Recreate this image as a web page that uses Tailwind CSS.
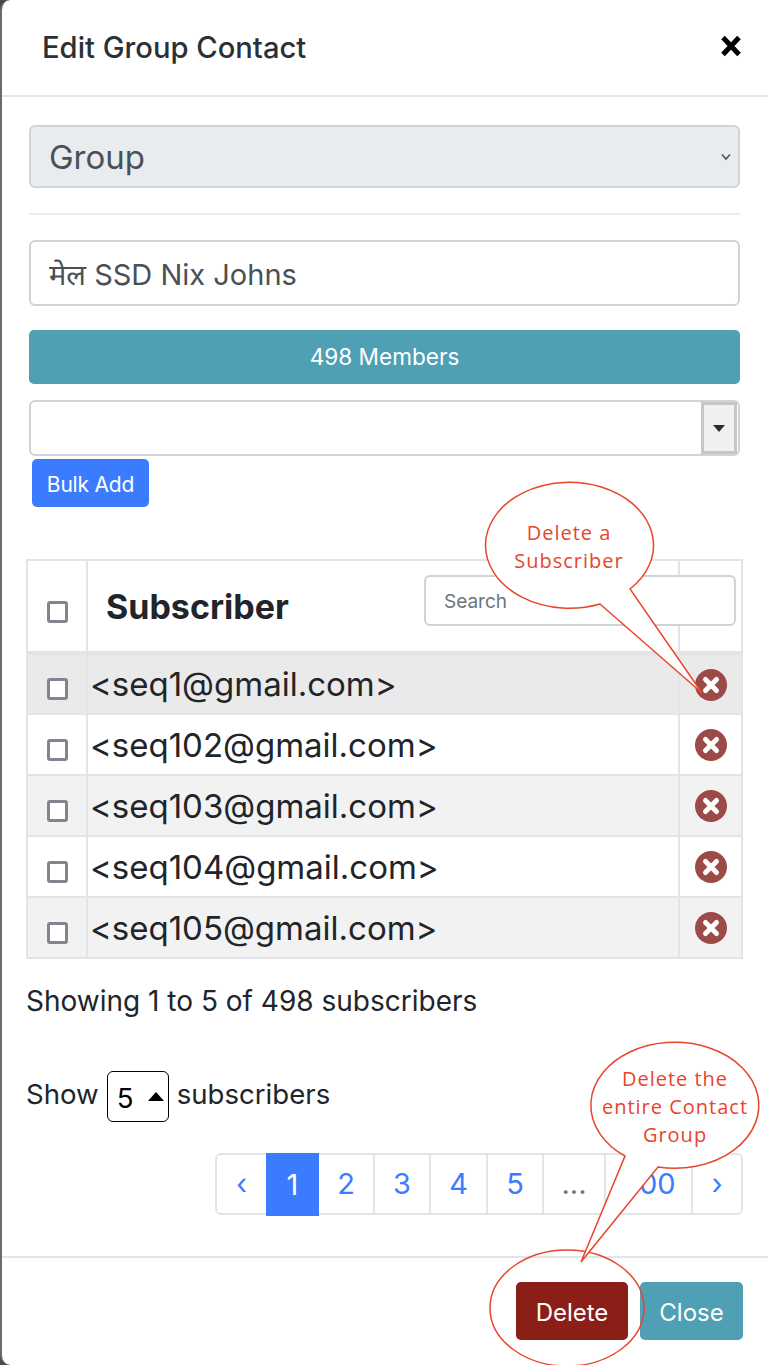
<!DOCTYPE html>
<html lang="en">
<head>
    <meta charset="UTF-8">
    <meta name="viewport" content="width=device-width, initial-scale=1.0">
    <title>Edit Group Contact</title>
    <script src="https://cdn.jsdelivr.net/npm/@tailwindcss/browser@4"></script>
</head>
<body class="bg-[#4a4a4a] font-['Inter','Noto_Sans',sans-serif] text-[#212529]">
    <div class="relative w-[768px] h-[1365px] overflow-hidden">
        <!-- modal -->
        <div class="flex flex-col h-full bg-white border-l-2 border-[#6b6b6b] rounded-tl-[10px] rounded-bl-[10px]">
            <header class="flex items-center justify-between h-[97px] shrink-0 border-b-2 border-[#e3e6e9] pl-[40px] pr-[26px]">
                <h5 class="text-[29.2px] font-medium text-[#2b3035]">Edit Group Contact</h5>
                <svg class="w-[22px] h-[22px] mb-[4px]" viewBox="0 0 22 22"><path d="M3 2.5 L19 19.5 M19 2.5 L3 19.5" stroke="#000" stroke-width="5" fill="none"/></svg>
            </header>

            <div class="flex-1 pl-[27px] pt-[28px]">
                <div class="flex items-center justify-between w-[711px] h-[63px] bg-[#e9ecef] border-2 border-[#ced4da] rounded-[6px] pl-[18px] pr-[6px] text-[33px] text-[#495057]">
                    <span class="pt-[3px]">Group</span>
                    <svg class="w-[12px] h-[8px]" viewBox="0 0 12 8"><path d="M2 1.5 L6 6 L10 1.5" stroke="#495057" stroke-width="1.5" fill="none"/></svg>
                </div>

                <hr class="w-[711px] mt-[25px] border-t-2 border-[#e9ebee]">

                <input type="text" value="मेल SSD Nix Johns" class="block w-[711px] h-[66px] mt-[25px] border-2 border-[#ced4da] rounded-[6px] pl-[18px] text-[29px] text-[#495057]">

                <div class="flex items-center justify-center w-[711px] h-[54px] mt-[24px] bg-[#4f9fb5] rounded-[5px] text-white text-[22.6px]">498 Members</div>

                <div class="flex justify-end items-center w-[711px] h-[56px] mt-[16px] border-2 border-[#ced4da] rounded-[6px] pr-[1px]">
                    <div class="flex items-center justify-center w-[36px] h-[52px] bg-[#f0f0f0] border-[3px] border-[#c6c6c6]">
                        <svg class="w-[12px] h-[7px]" viewBox="0 0 12 7"><path d="M0 0 H12 L6 7 Z" fill="#2b2b2b"/></svg>
                    </div>
                </div>

                <button class="block w-[117px] h-[48px] mt-[3px] ml-[3px] pt-[3px] bg-[#3b7cff] rounded-[5px] text-white text-[21px] tracking-[-0.2px]">Bulk Add</button>

                <!-- subscribers -->
                <div class="relative w-[717px] mt-[52px] -ml-[3px]">
                    <table class="w-full table-fixed border-collapse border-2 border-[#e2e5e8] text-[33px]">
                        <thead>
                            <tr class="h-[93px] border-b-[4px] border-[#e2e5e8]">
                                <th class="w-[60px] border-r-2 border-[#e2e5e8] pt-[12px]"><span class="block w-[21px] h-[22px] mx-auto bg-white border-[3px] border-[#85838f] rounded-[3px]"></span></th>
                                <th class="border-r-2 border-[#e2e5e8] pl-[18px] text-left text-[34px] font-bold">Subscriber</th>
                                <th class="w-[63px]"></th>
                            </tr>
                        </thead>
                        <tbody>
                            <tr class="h-[61px] border-b-2 border-[#e2e5e8] bg-[#eaeaea]">
                                <td class="border-r-2 border-[#e2e5e8] pt-[10px]"><span class="block w-[21px] h-[22px] mx-auto bg-white border-[3px] border-[#85838f] rounded-[3px]"></span></td>
                                <td class="border-r-2 border-[#e2e5e8] pl-[2px] pt-[2px]">&lt;seq1@gmail.com&gt;</td>
                                <td class="pt-[2px]"><svg class="w-[32px] h-[32px] mx-auto" viewBox="0 0 32 32"><circle cx="16" cy="16" r="16" fill="#9c4a48"/><path d="M10.5 10.5 L21.5 21.5 M21.5 10.5 L10.5 21.5" stroke="#fff" stroke-width="5" stroke-linecap="round"/></svg></td>
                            </tr>
                            <tr class="h-[61px] border-b-2 border-[#e2e5e8] bg-white">
                                <td class="border-r-2 border-[#e2e5e8] pt-[10px]"><span class="block w-[21px] h-[22px] mx-auto bg-white border-[3px] border-[#85838f] rounded-[3px]"></span></td>
                                <td class="border-r-2 border-[#e2e5e8] pl-[2px] pt-[2px]">&lt;seq102@gmail.com&gt;</td>
                                <td><svg class="w-[32px] h-[32px] mx-auto" viewBox="0 0 32 32"><circle cx="16" cy="16" r="16" fill="#9c4a48"/><path d="M10.5 10.5 L21.5 21.5 M21.5 10.5 L10.5 21.5" stroke="#fff" stroke-width="5" stroke-linecap="round"/></svg></td>
                            </tr>
                            <tr class="h-[61px] border-b-2 border-[#e2e5e8] bg-[#f2f2f2]">
                                <td class="border-r-2 border-[#e2e5e8] pt-[10px]"><span class="block w-[21px] h-[22px] mx-auto bg-white border-[3px] border-[#85838f] rounded-[3px]"></span></td>
                                <td class="border-r-2 border-[#e2e5e8] pl-[2px] pt-[2px]">&lt;seq103@gmail.com&gt;</td>
                                <td><svg class="w-[32px] h-[32px] mx-auto" viewBox="0 0 32 32"><circle cx="16" cy="16" r="16" fill="#9c4a48"/><path d="M10.5 10.5 L21.5 21.5 M21.5 10.5 L10.5 21.5" stroke="#fff" stroke-width="5" stroke-linecap="round"/></svg></td>
                            </tr>
                            <tr class="h-[61px] border-b-2 border-[#e2e5e8] bg-white">
                                <td class="border-r-2 border-[#e2e5e8] pt-[10px]"><span class="block w-[21px] h-[22px] mx-auto bg-white border-[3px] border-[#85838f] rounded-[3px]"></span></td>
                                <td class="border-r-2 border-[#e2e5e8] pl-[2px] pt-[2px]">&lt;seq104@gmail.com&gt;</td>
                                <td><svg class="w-[32px] h-[32px] mx-auto" viewBox="0 0 32 32"><circle cx="16" cy="16" r="16" fill="#9c4a48"/><path d="M10.5 10.5 L21.5 21.5 M21.5 10.5 L10.5 21.5" stroke="#fff" stroke-width="5" stroke-linecap="round"/></svg></td>
                            </tr>
                            <tr class="h-[61px] bg-[#f2f2f2]">
                                <td class="border-r-2 border-[#e2e5e8] pt-[10px]"><span class="block w-[21px] h-[22px] mx-auto bg-white border-[3px] border-[#85838f] rounded-[3px]"></span></td>
                                <td class="border-r-2 border-[#e2e5e8] pl-[2px] pt-[2px]">&lt;seq105@gmail.com&gt;</td>
                                <td><svg class="w-[32px] h-[32px] mx-auto" viewBox="0 0 32 32"><circle cx="16" cy="16" r="16" fill="#9c4a48"/><path d="M10.5 10.5 L21.5 21.5 M21.5 10.5 L10.5 21.5" stroke="#fff" stroke-width="5" stroke-linecap="round"/></svg></td>
                            </tr>
                        </tbody>
                    </table>
                    <!-- search sits over the column divider -->
                    <input type="text" placeholder="Search" class="absolute left-[398px] top-[16px] w-[312px] h-[51px] bg-white border-2 border-[#ced4da] rounded-[6px] pl-[18px] pt-[2px] text-[19px] placeholder:text-[#6c757d]">
                </div>

                <div class="h-[40px] mt-[22px] -ml-[3px] leading-[40px] text-[28px]">Showing 1 to 5 of 498 subscribers</div>

                <div class="flex items-center h-[51px] mt-[50px] -ml-[3px] text-[27.6px]">
                    <span class="pb-[4px]">Show</span>
                    <div class="flex items-center justify-between w-[62px] h-[51px] mx-[8px] border-[1.5px] border-black rounded-[6px] pl-[9px] pr-[4px] text-black">
                        <span class="pt-[4px]">5</span>
                        <svg class="w-[16px] h-[9px]" viewBox="0 0 16 9"><path d="M8 0 L16 9 H0 Z" fill="#000"/></svg>
                    </div>
                    <span class="pb-[4px]">subscribers</span>
                </div>

                <nav class="flex w-[528px] h-[62px] mt-[31px] ml-[186px] border-2 border-[#e2e5e8] rounded-[6px] text-[29px] text-[#3b7cff]">
                    <a class="flex items-center justify-center w-[49px]">‹</a>
                    <a class="flex items-center justify-center w-[53px] h-[63px] -my-[2px] bg-[#3b7cff] text-white">1</a>
                    <a class="flex items-center justify-center w-[56px] border-r-2 border-[#e2e5e8]">2</a>
                    <a class="flex items-center justify-center w-[56px] border-r-2 border-[#e2e5e8]">3</a>
                    <a class="flex items-center justify-center w-[57px] border-r-2 border-[#e2e5e8]">4</a>
                    <a class="flex items-center justify-center w-[56px] border-r-2 border-[#e2e5e8]">5</a>
                    <a class="flex items-center justify-center w-[62px] border-r-2 border-[#e2e5e8] text-[#6c757d]">...</a>
                    <a class="flex items-center justify-center w-[87px] border-r-2 border-[#e2e5e8]">500</a>
                    <a class="flex items-center justify-center flex-1">›</a>
                </nav>
            </div>

            <footer class="flex justify-end gap-[12px] h-[109px] shrink-0 border-t-2 border-[#e3e6e9] pt-[24px] pr-[25px] text-white text-[24px]">
                <button class="w-[112px] h-[58px] pt-[4px] bg-[#8b1e17] rounded-[5px]">Delete</button>
                <button class="w-[103px] h-[58px] pt-[4px] bg-[#4f9fb5] rounded-[5px]">Close</button>
            </footer>
        </div>

        <!-- hand drawn annotations on top of the screenshot -->
        <svg class="absolute inset-0 w-[768px] h-[1365px] pointer-events-none" viewBox="0 0 768 1365">
            <path d="M600 604 A84 63 0 1 1 630 589 L702 693 Z" fill="#fff" stroke="#e8452c" stroke-width="1.5"/>
            <text x="569" y="540" text-anchor="middle" class="font-['Open_Sans',sans-serif] text-[20px] tracking-[1px] fill-[#e8452c]">Delete a</text>
            <text x="569" y="568" text-anchor="middle" class="font-['Open_Sans',sans-serif] text-[20px] tracking-[1px] fill-[#e8452c]">Subscriber</text>

            <ellipse cx="567" cy="1308" rx="77" ry="58" fill="none" stroke="#e8452c" stroke-width="1.5"/>
            <path d="M625 1156 A84 63 0 1 1 658 1167 L581 1262 Z" fill="#fff" stroke="#e8452c" stroke-width="1.5"/>
            <text x="675" y="1086" text-anchor="middle" class="font-['Open_Sans',sans-serif] text-[20px] tracking-[1px] fill-[#e8452c]">Delete the</text>
            <text x="675" y="1114" text-anchor="middle" class="font-['Open_Sans',sans-serif] text-[20px] tracking-[1px] fill-[#e8452c]">entire Contact</text>
            <text x="675" y="1142" text-anchor="middle" class="font-['Open_Sans',sans-serif] text-[20px] tracking-[1px] fill-[#e8452c]">Group</text>
        </svg>
    </div>
</body>
</html>
